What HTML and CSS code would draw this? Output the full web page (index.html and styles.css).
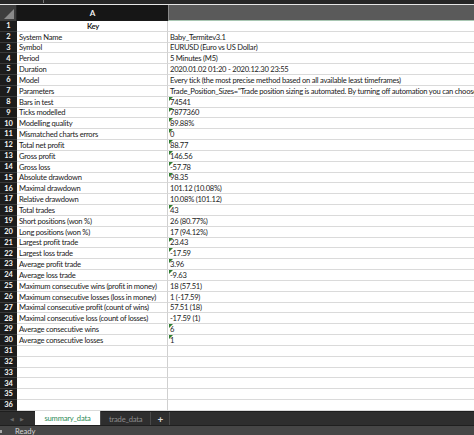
FILE: index.html
```html
<!DOCTYPE html>
<html>
<head>
<meta charset="utf-8">
<link rel="stylesheet" href="styles.css">
</head>
<body>
<div class="app">
  <div class="topbar"><span class="tick"></span></div>
  <div class="colheads">
    <div class="corner"><span class="tri"></span></div>
    <div class="ch ch-a">A</div>
    <div class="ch ch-b"></div>
  </div>
  <div class="grid">
    <div class="rn">1</div><div class="ca key">Key</div><div class="cb"></div>
    <div class="rn">2</div><div class="ca">System Name</div><div class="cb">Baby_Termitev3.1</div>
    <div class="rn">3</div><div class="ca">Symbol</div><div class="cb">EURUSD (Euro vs US Dollar)</div>
    <div class="rn">4</div><div class="ca">Period</div><div class="cb">5 Minutes (M5)</div>
    <div class="rn">5</div><div class="ca">Duration</div><div class="cb">2020.01.02 01:20 - 2020.12.30 23:55</div>
    <div class="rn">6</div><div class="ca">Model</div><div class="cb">Every tick (the most precise method based on all available least timeframes)</div>
    <div class="rn">7</div><div class="ca">Parameters</div><div class="cb">Trade_Position_Sizes="Trade position sizing is automated. By turning off automation you can choose</div>
    <div class="rn">8</div><div class="ca">Bars in test</div><div class="cb flag">74541</div>
    <div class="rn">9</div><div class="ca">Ticks modelled</div><div class="cb flag">7877360</div>
    <div class="rn">10</div><div class="ca">Modelling quality</div><div class="cb flag">89.88%</div>
    <div class="rn">11</div><div class="ca">Mismatched charts errors</div><div class="cb flag">0</div>
    <div class="rn">12</div><div class="ca">Total net profit</div><div class="cb flag">88.77</div>
    <div class="rn">13</div><div class="ca">Gross profit</div><div class="cb flag">146.56</div>
    <div class="rn">14</div><div class="ca">Gross loss</div><div class="cb flag">-57.78</div>
    <div class="rn">15</div><div class="ca">Absolute drawdown</div><div class="cb flag">98.35</div>
    <div class="rn">16</div><div class="ca">Maximal drawdown</div><div class="cb">101.12 (10.08%)</div>
    <div class="rn">17</div><div class="ca">Relative drawdown</div><div class="cb">10.08% (101.12)</div>
    <div class="rn">18</div><div class="ca">Total trades</div><div class="cb flag">43</div>
    <div class="rn">19</div><div class="ca">Short positions (won %)</div><div class="cb">26 (80.77%)</div>
    <div class="rn">20</div><div class="ca">Long positions (won %)</div><div class="cb">17 (94.12%)</div>
    <div class="rn">21</div><div class="ca">Largest profit trade</div><div class="cb flag">23.43</div>
    <div class="rn">22</div><div class="ca">Largest loss trade</div><div class="cb flag">-17.59</div>
    <div class="rn">23</div><div class="ca">Average profit trade</div><div class="cb flag">3.96</div>
    <div class="rn">24</div><div class="ca">Average loss trade</div><div class="cb flag">-9.63</div>
    <div class="rn">25</div><div class="ca">Maximum consecutive wins (profit in money)</div><div class="cb">18 (57.51)</div>
    <div class="rn">26</div><div class="ca">Maximum consecutive losses (loss in money)</div><div class="cb">1 (-17.59)</div>
    <div class="rn">27</div><div class="ca">Maximal consecutive profit (count of wins)</div><div class="cb">57.51 (18)</div>
    <div class="rn">28</div><div class="ca">Maximal consecutive loss (count of losses)</div><div class="cb">-17.59 (1)</div>
    <div class="rn">29</div><div class="ca">Average consecutive wins</div><div class="cb flag">6</div>
    <div class="rn">30</div><div class="ca">Average consecutive losses</div><div class="cb flag">1</div>
    <div class="rn">31</div><div class="ca"></div><div class="cb"></div>
    <div class="rn">32</div><div class="ca"></div><div class="cb"></div>
    <div class="rn">33</div><div class="ca"></div><div class="cb"></div>
    <div class="rn">34</div><div class="ca"></div><div class="cb"></div>
    <div class="rn">35</div><div class="ca"></div><div class="cb"></div>
    <div class="rn">36</div><div class="ca"></div><div class="cb"></div>
  </div>
  <div class="tabbar">
    <div class="navs"><span class="arr">&#9664;</span><span class="arr">&#9654;</span></div>
    <div class="tab active">summary_data</div>
    <div class="tab">trade_data</div>
    <div class="tab plus">+</div>
  </div>
  <div class="status"><span class="mark"></span>Ready</div>
</div>
</body>
</html>
```

FILE: styles.css
```css
* { box-sizing: border-box; }
html, body { margin: 0; padding: 0; }
body {
  width: 474px;
  height: 435px;
  overflow: hidden;
  background: #ffffff;
  font-family: Lato, "Open Sans", "Liberation Sans", sans-serif;
  font-size: 8px;
  color: #1a1a1a;
}
.app {
  display: flex;
  flex-direction: column;
  width: 474px;
  height: 435px;
}
.topbar {
  height: 5px;
  background: #262626;
  border-bottom: 1px solid #e6e6e6;
  position: relative;
  flex: none;
}
.tick {
  position: absolute;
  left: 43px;
  top: 0;
  width: 1px;
  height: 3px;
  background: #777;
}
.colheads {
  display: grid;
  grid-template-columns: 17px 151px 1fr;
  height: 16px;
  flex: none;
}
.corner {
  background: #3d3d3d;
  position: relative;
  border-right: 1px solid #222;
}
.tri {
  position: absolute;
  right: 2px;
  bottom: 2px;
  width: 0;
  height: 0;
  border-left: 10px solid transparent;
  border-bottom: 10px solid #8a8a8a;
}
.ch {
  display: flex;
  align-items: center;
  justify-content: center;
  font-weight: 700;
  color: #f2f2f2;
  font-size: 8px;
}
.ch-a {
  background: #161616;
  border-bottom: 1px solid #1a1a1a;
}
.ch-b {
  background: #5a5a5a;
  border-left: 1px solid #8a8a8a;
  border-bottom: 1px solid #a9c7b3;
}
.grid {
  display: grid;
  grid-template-columns: 17px 151px 1fr;
  grid-template-rows: repeat(36, 1fr);
  height: 390px;
  flex: none;
}
.rn {
  background: #1c1c1c;
  color: #f4f4f4;
  font-weight: 700;
  font-size: 7.5px;
  display: flex;
  align-items: center;
  justify-content: center;
  border-bottom: 1px solid #3a3a3a;
  line-height: 1;
}
.ca, .cb {
  border-bottom: 1px solid #dadada;
  display: flex;
  align-items: flex-end;
  padding: 0 0 0.5px 2px;
  white-space: nowrap;
  overflow: hidden;
  line-height: 1;
  position: relative;
  font-size: 7.6px;
  letter-spacing: -0.25px;
}
.ca {
  border-right: 1px solid #d0d0d0;
}
.key {
  justify-content: center;
  font-weight: 700;
}
.flag::before {
  content: "";
  position: absolute;
  left: 1px;
  top: 0;
  width: 0;
  height: 0;
  border-top: 4px solid #2f7d32;
  border-right: 4px solid transparent;
}
.tabbar {
  height: 14px;
  background: #2e2e2e;
  display: flex;
  align-items: stretch;
  flex: none;
  border-top: 1px solid #1e1e1e;
}
.navs {
  width: 35px;
  display: flex;
  align-items: center;
  gap: 6px;
  padding-left: 10px;
}
.arr {
  color: #6a6a6a;
  font-size: 5px;
}
.tab {
  display: flex;
  align-items: center;
  padding: 0 8px;
  color: #8d8d8d;
  font-size: 7.6px;
  letter-spacing: -0.2px;
  border-right: 1px solid #4a4a4a;
}
.tab.active {
  background: #ffffff;
  color: #2e8b57;
  width: 66px;
  justify-content: center;
  margin-top: -1px;
}
.tab.plus {
  color: #d8d8d8;
  font-weight: 700;
  font-size: 10px;
  padding: 0 6px;
}
.status {
  flex: 1;
  background: #464646;
  color: #d8d8d8;
  font-size: 7.6px;
  display: flex;
  align-items: center;
  padding-left: 15px;
  border-top: 1px solid #1f1f1f;
  position: relative;
}
.mark {
  position: absolute;
  left: 0;
  top: 4px;
  width: 2px;
  height: 3px;
  background: #aaa;
}
```
